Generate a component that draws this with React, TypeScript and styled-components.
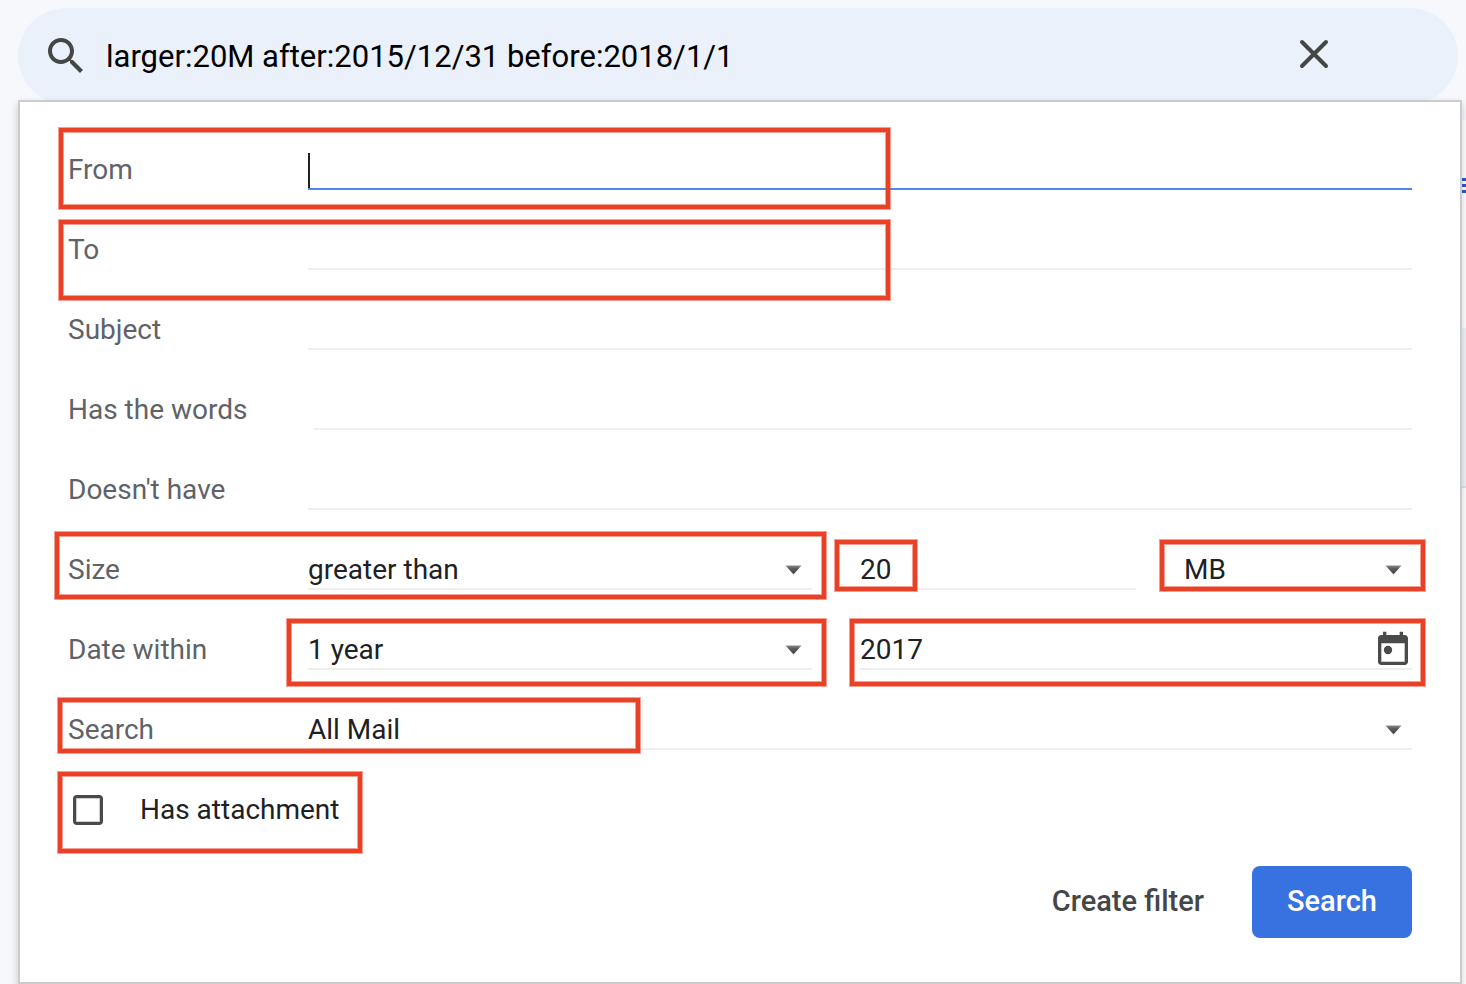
import React, { useState } from "react";
import styled, { createGlobalStyle } from "styled-components";

const font = `Roboto, "Liberation Sans", sans-serif`;

const GlobalStyle = createGlobalStyle`
  *, *::before, *::after { box-sizing: border-box; }
  body { margin: 0; background: #f6f8fc; font-family: ${font}; }
  input, select, button { font-family: inherit; }
`;

const Page = styled.div`
  position: relative;
  overflow: hidden;
`;

const Backdrop = styled.div`
  position: absolute;
  top: 120px;
  right: 0;
  bottom: 0;
  width: 40px;
  background: #ffffff;
`;

const BackdropRow = styled.div`
  margin-top: 208px;
  height: 160px;
  background: #f0f3fb;
  border-bottom: 2px solid #dfe1ec;
`;

const BackdropLink = styled.svg`
  position: absolute;
  top: 57px;
  right: 0;
  width: 4px;
  height: 18px;
`;

const SearchBar = styled.div`
  position: relative;
  display: flex;
  align-items: center;
  height: 96px;
  margin: 8px 8px 0 18px;
  padding: 0 120px 0 24px;
  border-radius: 48px;
  background: #eaf1fb;
`;

const IconButton = styled.button`
  flex: none;
  display: block;
  width: 48px;
  height: 48px;
  padding: 0;
  border: 0;
  background: none;
  color: #444746;

  svg {
    display: block;
    width: 100%;
    height: 100%;
    fill: currentColor;
  }
`;

const Query = styled.input`
  flex: 1;
  min-width: 0;
  height: 48px;
  margin: 0 16px;
  padding: 0;
  border: 0;
  outline: 0;
  background: none;
  color: #000000;
  font-size: 31px;
`;

const Panel = styled.form`
  position: relative;
  display: flex;
  flex-direction: column;
  gap: 40px;
  margin: -4px 4px 0 18px;
  padding: 48px 48px 44px;
  border: 2px solid #cccccc;
  background: #ffffff;
  box-shadow: 0 4px 8px rgba(0, 0, 0, 0.2);
`;

const Row = styled.div`
  position: relative;
  display: grid;
  grid-template-columns: 240px minmax(0, 1fr);
  align-items: center;
  height: 40px;
`;

const Label = styled.label`
  color: #5f6368;
  font-size: 28px;
  line-height: 40px;
  white-space: nowrap;
`;

const Fields = styled.div<{ $columns: string }>`
  display: grid;
  grid-template-columns: ${(p) => p.$columns};
  column-gap: 48px;
`;

const Field = styled.div<{ $inset?: boolean }>`
  position: relative;
  min-width: 0;
  margin-left: ${(p) => (p.$inset ? "6px" : "0")};
`;

const TextInput = styled.input<{ $active?: boolean }>`
  display: block;
  width: 100%;
  height: 40px;
  padding: 0;
  border: 0;
  border-bottom: 2px solid ${(p) => (p.$active ? "#4f86ec" : "#eeeeef")};
  border-radius: 0;
  outline: 0;
  background: none;
  color: #202124;
  font-size: 28px;
`;

const SelectInput = styled.select`
  appearance: none;
  display: block;
  width: 100%;
  height: 40px;
  padding: 0 48px 0 0;
  border: 0;
  border-bottom: 2px solid #eeeeef;
  border-radius: 0;
  outline: 0;
  background: none;
  color: #202124;
  font-size: 28px;
`;

const Arrow = styled.svg`
  position: absolute;
  top: 15px;
  right: 10px;
  width: 17px;
  height: 10px;
  pointer-events: none;
`;

const Caret = styled.span`
  position: absolute;
  top: 3px;
  left: 0;
  width: 2px;
  height: 35px;
  background: #202124;
`;

const CalendarButton = styled(IconButton)`
  position: absolute;
  top: 0;
  right: -1px;
  width: 40px;
  height: 40px;
  color: #4a4a4a;
`;

const Mark = styled.span<{
  $top: number;
  $left: number;
  $height: number;
  $width?: number;
  $right?: number;
}>`
  position: absolute;
  z-index: 1;
  top: ${(p) => p.$top}px;
  left: ${(p) => p.$left}px;
  height: ${(p) => p.$height}px;
  ${(p) => (p.$width ? `width: ${p.$width}px;` : `right: ${p.$right}px;`)}
  border: 4px solid #ea4025;
  box-shadow: 0 0 0 1px rgba(234, 64, 37, 0.5), inset 0 0 0 1px rgba(234, 64, 37, 0.5);
  pointer-events: none;
`;

const CheckRow = styled.div`
  position: relative;
  display: flex;
  align-items: center;
  gap: 37px;
  height: 40px;
  padding-left: 5px;
`;

const CheckBox = styled.input`
  appearance: none;
  width: 30px;
  height: 30px;
  margin: 0;
  border: 3px solid #4a4a4a;
  border-radius: 4px;
  background: #ffffff;
  box-shadow: inset 0 0 0 1px #d0d0d0;

  &:checked {
    background: #4a4a4a;
  }
`;

const CheckLabel = styled(Label)`
  color: #202124;
`;

const Actions = styled.div`
  display: flex;
  justify-content: flex-end;
  align-items: center;
  gap: 16px;
  margin-top: -4px;
`;

const Button = styled.button<{ $primary?: boolean }>`
  height: 72px;
  min-width: 160px;
  padding: 0 32px 2px;
  border: 0;
  border-radius: 8px;
  background: ${(p) => (p.$primary ? "#3871e0" : "transparent")};
  color: ${(p) => (p.$primary ? "#ffffff" : "#444746")};
  font-size: 29px;
  font-weight: 500;
`;

function DropArrow() {
  return (
    <Arrow viewBox="0 0 17 10" aria-hidden="true">
      <defs>
        <linearGradient id="arrowShade" x1="0" y1="0" x2="0" y2="1">
          <stop offset="0" stopColor="#8c8c8c" />
          <stop offset="0.35" stopColor="#5a5a5a" />
          <stop offset="1" stopColor="#4a4a4a" />
        </linearGradient>
      </defs>
      <path d="M0.5 0.5h16L8.500 9.500z" fill="url(#arrowShade)" />
    </Arrow>
  );
}

function Choice({ id, label, options }: { id: string; label?: string; options: string[] }) {
  return (
    <>
      <SelectInput id={id} aria-label={label}>
        {options.map((option) => (
          <option key={option}>{option}</option>
        ))}
      </SelectInput>
      <DropArrow />
    </>
  );
}

export default function App() {
  const [query, setQuery] = useState("larger:20M after:2015/12/31 before:2018/1/1");

  return (
    <>
      <GlobalStyle />
      <Page>
        <Backdrop>
          <BackdropRow />
          <BackdropLink viewBox="0 0 4 18" aria-hidden="true">
            <path d="M0 2.500h4M0 8.500h4M0 14.500h4" stroke="#2b5bcb" strokeWidth="3" />
          </BackdropLink>
        </Backdrop>

        <SearchBar role="search">
          <IconButton type="button" aria-label="Search mail">
            <svg viewBox="0 0 24 24">
              <path d="M15.500 14h-.79l-.28-.27C15.410 12.590 16 11.110 16 9.500 16 5.910 13.090 3 9.500 3S3 5.910 3 9.500 5.910 16 9.500 16c1.610 0 3.090-.59 4.230-1.570l.27.28v.79l5 4.990L20.490 19l-4.990-5zm-6 0C7.010 14 5 11.990 5 9.500S7.010 5 9.500 5 14 7.010 14 9.500 11.990 14 9.500 14z" />
            </svg>
          </IconButton>
          <Query
            aria-label="Search mail"
            value={query}
            onChange={(e) => setQuery(e.target.value)}
          />
          <IconButton type="button" aria-label="Clear search" onClick={() => setQuery("")}>
            <svg viewBox="0 0 24 24">
              <path
                d="M6 5L18 17M18 5L6 17"
                stroke="currentColor"
                strokeWidth="2"
                strokeLinecap="round"
              />
            </svg>
          </IconButton>
        </SearchBar>

        <Panel onSubmit={(e) => e.preventDefault()}>
          <Row>
            <Label htmlFor="from">From</Label>
            <Field>
              <TextInput id="from" $active />
              <Caret />
            </Field>
            <Mark $top={-22} $left={-9} $width={831} $height={81} />
          </Row>
          <Row>
            <Label htmlFor="to">To</Label>
            <Field>
              <TextInput id="to" />
            </Field>
            <Mark $top={-10} $left={-9} $width={831} $height={80} />
          </Row>
          <Row>
            <Label htmlFor="subject">Subject</Label>
            <Field>
              <TextInput id="subject" />
            </Field>
          </Row>
          <Row>
            <Label htmlFor="words">Has the words</Label>
            <Field $inset>
              <TextInput id="words" />
            </Field>
          </Row>
          <Row>
            <Label htmlFor="without">Doesn't have</Label>
            <Field>
              <TextInput id="without" />
            </Field>
          </Row>
          <Row>
            <Label htmlFor="size">Size</Label>
            <Fields $columns="504fr 276fr 228fr">
              <Field>
                <Choice id="size" options={["greater than", "less than"]} />
                <Mark $top={-18} $left={-253} $right={-14} $height={67} />
              </Field>
              <Field>
                <TextInput aria-label="Size amount" defaultValue="20" />
                <Mark $top={-10} $left={-25} $width={82} $height={51} />
              </Field>
              <Field>
                <Choice id="unit" label="Size unit" options={["MB", "KB", "Bytes"]} />
                <Mark $top={-10} $left={-24} $right={-13} $height={51} />
              </Field>
            </Fields>
          </Row>
          <Row>
            <Label htmlFor="within">Date within</Label>
            <Fields $columns="504fr 552fr">
              <Field>
                <Choice id="within" options={["1 year", "6 months", "1 month", "1 week"]} />
                <Mark $top={-11} $left={-21} $right={-14} $height={67} />
              </Field>
              <Field>
                <TextInput aria-label="Date" defaultValue="2017" />
                <CalendarButton type="button" aria-label="Pick a date">
                  <svg viewBox="0 0 24 24">
                    <path d="M19 3h-1V1h-2v2H8V1H6v2H5c-1.110 0-2 .9-2 2v14c0 1.100.89 2 2 2h14c1.100 0 2-.9 2-2V5c0-1.100-.9-2-2-2zm0 16H5V8h14v11z" />
                    <circle cx="9" cy="12" r="2.500" />
                  </svg>
                </CalendarButton>
                <Mark $top={-11} $left={-10} $right={-13} $height={67} />
              </Field>
            </Fields>
          </Row>
          <Row>
            <Label htmlFor="scope">Search</Label>
            <Field>
              <Choice id="scope" options={["All Mail", "Inbox", "Starred", "Sent"]} />
            </Field>
            <Mark $top={-12} $left={-10} $width={582} $height={55} />
          </Row>
          <CheckRow>
            <CheckBox type="checkbox" id="attachment" />
            <CheckLabel htmlFor="attachment">Has attachment</CheckLabel>
            <Mark $top={-18} $left={-10} $width={304} $height={81} />
          </CheckRow>
          <Actions>
            <Button type="button">Create filter</Button>
            <Button type="submit" $primary>
              Search
            </Button>
          </Actions>
        </Panel>
      </Page>
    </>
  );
}
